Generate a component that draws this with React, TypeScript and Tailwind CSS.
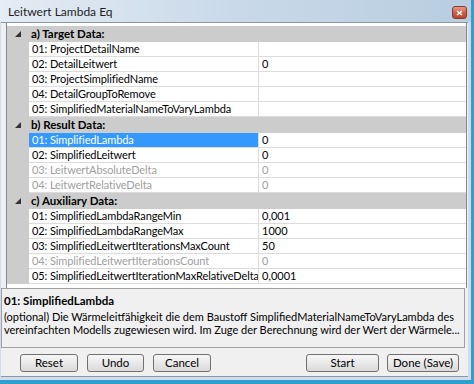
import React from "react";

type Item = { name: string; value: string; disabled?: boolean; selected?: boolean };
type Section = { title: string; items: Item[] };

const SECTIONS: Section[] = [
  {
    title: "a) Target Data:",
    items: [
      { name: "01: ProjectDetailName", value: "" },
      { name: "02: DetailLeitwert", value: "0" },
      { name: "03: ProjectSimplifiedName", value: "" },
      { name: "04: DetailGroupToRemove", value: "" },
      { name: "05: SimplifiedMaterialNameToVaryLambda", value: "" },
    ],
  },
  {
    title: "b) Result Data:",
    items: [
      { name: "01: SimplifiedLambda", value: "0", selected: true },
      { name: "02: SimplifiedLeitwert", value: "0" },
      { name: "03: LeitwertAbsoluteDelta", value: "0", disabled: true },
      { name: "04: LeitwertRelativeDelta", value: "0", disabled: true },
    ],
  },
  {
    title: "c) Auxiliary Data:",
    items: [
      { name: "01: SimplifiedLambdaRangeMin", value: "0,001" },
      { name: "02: SimplifiedLambdaRangeMax", value: "1000" },
      { name: "03: SimplifiedLeitwertIterationsMaxCount", value: "50" },
      { name: "04: SimplifiedLeitwertIterationsCount", value: "0", disabled: true },
      { name: "05: SimplifiedLeitwertIterationMaxRelativeDelta", value: "0,0001" },
    ],
  },
];

function CategoryRow({ title }: { title: string }) {
  return (
    <div className="flex h-[16px] items-center bg-[#cccccc] shrink-0">
      <div className="w-[22px] flex justify-center shrink-0">
        <svg width="6" height="6" viewBox="0 0 6 6">
          <polygon points="6,0 6,6 0,6" fill="#333333" />
        </svg>
      </div>
      <span className="pl-[2px] font-bold text-[11.5px] leading-[16px] text-black">{title}</span>
    </div>
  );
}

function ItemRow({ item }: { item: Item }) {
  const nameColor = item.selected
    ? "bg-[#3399ff] text-white"
    : item.disabled
    ? "bg-white text-[#a0a0a0]"
    : "bg-white text-black";
  return (
    <div className="flex h-[15px] shrink-0 text-[11px] leading-[14px]">
      <div className="w-[22px] bg-[#cccccc] shrink-0" />
      <div
        className={
          "w-[229px] shrink-0 border-b border-[#dcdcdc] pl-[3px] tracking-[-0.1px] overflow-hidden whitespace-nowrap " +
          nameColor
        }
      >
        {item.name}
      </div>
      <div className="w-[1px] bg-[#dcdcdc] shrink-0" />
      <div
        className={
          "flex-1 min-w-0 bg-white border-b border-[#dcdcdc] pl-[3px] whitespace-nowrap " +
          (item.disabled ? "text-[#a0a0a0]" : "text-black")
        }
      >
        {item.value}
      </div>
    </div>
  );
}

function Button({ label, width }: { label: string; width: string }) {
  return (
    <button
      className={
        "h-[18px] rounded-[3px] border border-[#707070] bg-gradient-to-b from-[#f6f6f6] via-[#e9e9e9] to-[#d9d9d9] text-[11.5px] leading-[16px] text-black " +
        width
      }
    >
      {label}
    </button>
  );
}

export default function App() {
  return (
    <div className="w-[474px] h-[384px] bg-[#2f9fd0] overflow-hidden font-['Lato','Liberation_Sans',sans-serif]">
      <div className="w-[471px] h-[380px] bg-[#cfdceb] flex flex-col">
        {/* ── Title bar ── */}
        <div className="h-[22px] shrink-0 flex items-center justify-between pl-[8px] pr-[4px] bg-gradient-to-r from-[#e4ecf4] via-[#c9d9e9] to-[#b8cde0]">
          <span className="text-[12px] text-[#1e1e1e] pt-[1px]">Leitwert Lambda Eq</span>
          <div className="w-[15px] h-[13px] mt-[3px] rounded-[3px] border border-[#8a3a2a] bg-gradient-to-b from-[#e69a86] via-[#d0604a] to-[#b8432c] flex items-center justify-center">
            <svg width="7" height="6" viewBox="0 0 7 6">
              <path d="M1 1 L6 5 M6 1 L1 5" stroke="#ffffff" strokeWidth="1.6" />
            </svg>
          </div>
        </div>

        {/* ── Client ── */}
        <div className="flex-1 flex min-h-0 pl-[1px] pr-[3px] pb-[3px]">
          <div className="flex-1 min-w-0 flex flex-col bg-[#f0f0f0] border-t border-b border-[#8c98a4]">
            {/* ── Property grid ── */}
            <div className="h-[265px] pl-[5px] pr-[1px] shrink-0">
              <div className="h-full border-l border-r border-[#828790] bg-white flex flex-col pt-[3px]">
                {SECTIONS.map((s) => (
                  <React.Fragment key={s.title}>
                    <CategoryRow title={s.title} />
                    {s.items.map((it) => (
                      <ItemRow key={it.name} item={it} />
                    ))}
                  </React.Fragment>
                ))}
              </div>
            </div>

            {/* ── Help panel ── */}
            <div className="h-[60px] shrink-0 mr-[3px] border border-[#a0a0a0] bg-[#f0f0f0] px-[2px] pt-[5px] text-[11px] leading-[13px] text-black whitespace-nowrap overflow-hidden">
              <div className="font-bold text-[11.5px]">01: SimplifiedLambda</div>
              <div className="mt-[3px]">
                (optional) Die Wärmeleitfähigkeit die dem Baustoff SimplifiedMaterialNameToVaryLambda des
              </div>
              <div>vereinfachten Modells zugewiesen wird. Im Zuge der Berechnung wird der Wert der Wärmele...</div>
            </div>

            {/* ── Buttons ── */}
            <div className="flex-1 flex items-start pt-[6px] pl-[19px] pr-[9px]">
              <div className="flex gap-[9px]">
                <Button label="Reset" width="w-[58px]" />
                <Button label="Undo" width="w-[57px]" />
                <Button label="Cancel" width="w-[58px]" />
              </div>
              <div className="flex-1" />
              <div className="flex gap-[8px]">
                <Button label="Start" width="w-[73px]" />
                <Button label="Done (Save)" width="w-[72px]" />
              </div>
            </div>
          </div>
        </div>
      </div>
    </div>
  );
}
